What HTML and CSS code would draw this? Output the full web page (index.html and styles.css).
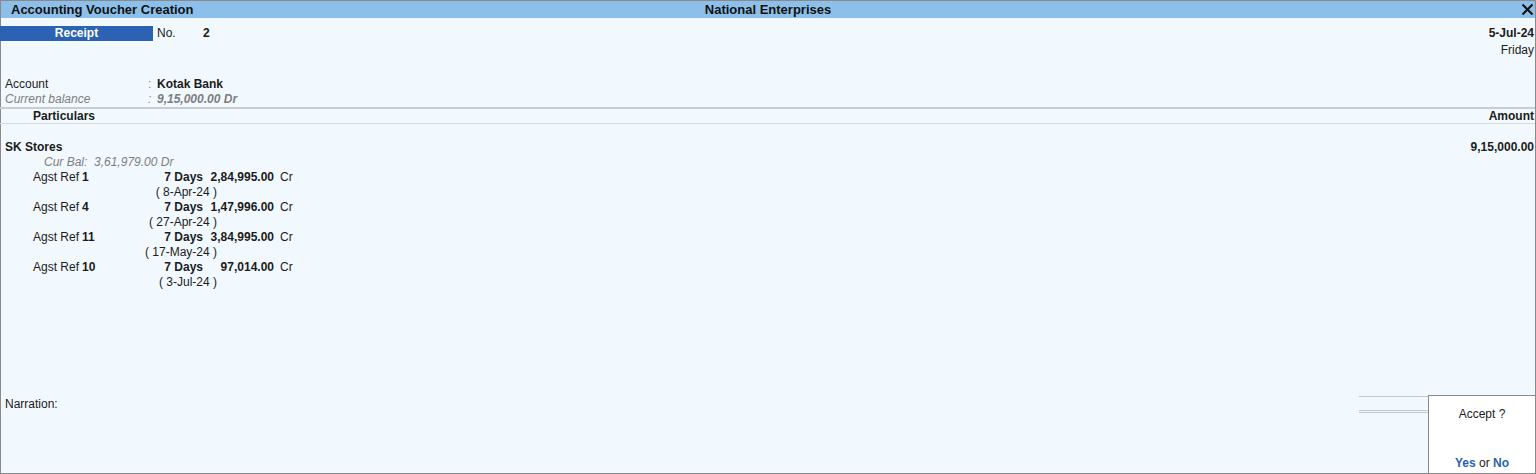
FILE: index.html
```html
<!DOCTYPE html>
<html lang="en">

<head>
    <meta charset="UTF-8" />
    <meta name="viewport" content="width=device-width, initial-scale=1.0" />
    <title>Accounting Voucher Creation</title>
    <link rel="stylesheet" href="styles.css">
</head>

<body>
    <div class="window">
        <div class="titlebar">
            <span class="title-left">Accounting Voucher Creation</span>
            <span class="title-center">National Enterprises</span>
            <span class="title-right">
                <svg class="close" width="13" height="13" viewBox="0 0 13 13">
                    <path d="M1.5 1.5 L11.5 11.5 M11.5 1.5 L1.5 11.5" stroke="#111" stroke-width="2" fill="none" />
                </svg>
            </span>
        </div>

        <div class="voucher-head">
            <div class="voucher-type">
                <span class="type-box">Receipt</span>
                <span class="no-label">No.</span>
                <span class="no-value">2</span>
            </div>
            <div class="voucher-date">
                <div class="date">5-Jul-24</div>
                <div class="day">Friday</div>
            </div>
        </div>

        <div class="account">
            <div class="account-row">
                <span class="acc-label">Account</span>
                <span class="acc-colon">:</span>
                <span class="acc-value">Kotak Bank</span>
            </div>
            <div class="account-row muted">
                <span class="acc-label">Current balance</span>
                <span class="acc-colon">:</span>
                <span class="acc-value">9,15,000.00 Dr</span>
            </div>
        </div>

        <div class="col-head">
            <span class="col-particulars">Particulars</span>
            <span class="col-amount">Amount</span>
        </div>

        <div class="entries">
            <div class="ledger-row">
                <span class="ledger-name">SK Stores</span>
                <span class="ledger-amount">9,15,000.00</span>
            </div>
            <div class="cur-bal">Cur Bal:&nbsp; 3,61,979.00 Dr</div>
            <div id="refList"></div>
        </div>

        <div class="footer">
            <span class="narration">Narration:</span>
            <div class="totals"></div>
        </div>

        <div class="accept">
            <div class="accept-q">Accept ?</div>
            <div class="accept-opts"><span class="opt">Yes</span> or <span class="opt">No</span></div>
        </div>
    </div>

    <script>
        const refs = [
            { no: 1, days: "7 Days", amount: "2,84,995.00", date: "8-Apr-24" },
            { no: 4, days: "7 Days", amount: "1,47,996.00", date: "27-Apr-24" },
            { no: 11, days: "7 Days", amount: "3,84,995.00", date: "17-May-24" },
            { no: 10, days: "7 Days", amount: "97,014.00", date: "3-Jul-24" }
        ];

        const refList = document.getElementById("refList");

        refs.forEach(ref => {
            refList.innerHTML += `
          <div class="ref-row">
            <span class="ref-label">Agst Ref</span>
            <span class="ref-no">${ref.no}</span>
            <span class="ref-days">${ref.days}</span>
            <span class="ref-amount">${ref.amount}</span>
            <span class="ref-side">Cr</span>
          </div>
          <div class="ref-date">( ${ref.date} )</div>
        `;
        });
    </script>
</body>

</html>
```

FILE: styles.css
```css
body {
    margin: 0;
    font-family: "Liberation Sans", Arial, sans-serif;
    font-size: 12px;
    color: #1b1b1b;
}

.window {
    position: relative;
    box-sizing: border-box;
    width: 1536px;
    height: 474px;
    border: 1px solid #8a8a8a;
    background: #f2f9fe;
    display: flex;
    flex-direction: column;
}

.titlebar {
    height: 17px;
    background: #8cc0ea;
    display: grid;
    grid-template-columns: 1fr auto 1fr;
    align-items: center;
    font-size: 13px;
    font-weight: bold;
    color: #111;
}

.title-left {
    padding-left: 10px;
}

.title-right {
    display: flex;
    justify-content: flex-end;
    padding-right: 1px;
}

.close {
    display: block;
}

.voucher-head {
    height: 51px;
    margin-top: 8px;
    display: flex;
    justify-content: space-between;
    line-height: 15px;
}

.voucher-type {
    display: flex;
    align-items: flex-start;
}

.type-box {
    width: 153px;
    height: 15px;
    margin-left: -1px;
    background: #2b62b3;
    color: #fff;
    font-weight: bold;
    text-align: center;
}

.no-label {
    margin-left: 4px;
    width: 46px;
}

.no-value {
    font-weight: bold;
}

.voucher-date {
    text-align: right;
    padding-right: 1px;
}

.date {
    font-weight: bold;
}

.day {
    margin-top: 2px;
}

.account {
    line-height: 15px;
    padding-left: 4px;
}

.account-row {
    display: flex;
}

.acc-label {
    width: 143px;
}

.acc-colon {
    width: 9px;
    color: #888;
}

.acc-value {
    font-weight: bold;
}

.muted {
    color: #7d7d7d;
    font-style: italic;
}

.col-head {
    display: flex;
    justify-content: space-between;
    line-height: 14px;
    font-weight: bold;
    border-top: 2px solid #c9cdd0;
    border-bottom: 1px solid #d6dadd;
    margin-left: -1px;
    padding-left: 33px;
    padding-right: 1px;
}

.entries {
    margin-top: 16px;
    line-height: 15px;
}

.ledger-row {
    display: flex;
    justify-content: space-between;
    font-weight: bold;
    padding-left: 4px;
    padding-right: 1px;
}

.cur-bal {
    padding-left: 43px;
    color: #7d7d7d;
    font-style: italic;
}

.ref-row {
    display: grid;
    grid-template-columns: 49px 68px 53px 71px auto;
    padding-left: 32px;
}

.ref-no,
.ref-days,
.ref-amount {
    font-weight: bold;
}

.ref-days,
.ref-amount {
    text-align: right;
}

.ref-side {
    padding-left: 6px;
}

.ref-date {
    width: 216px;
    text-align: right;
}

.footer {
    margin-top: auto;
    margin-bottom: 60px;
    display: flex;
    justify-content: space-between;
    line-height: 15px;
}

.narration {
    padding-left: 4px;
}

.totals {
    width: 70px;
    height: 13px;
    margin-top: -1px;
    margin-right: 106px;
    border-top: 1px solid #c4c8cb;
    border-bottom: 3px double #c4c8cb;
}

.accept {
    position: absolute;
    right: -1px;
    bottom: -1px;
    box-sizing: border-box;
    width: 108px;
    height: 79px;
    background: #fff;
    border: 1px solid #8a8a8a;
    text-align: center;
    display: flex;
    flex-direction: column;
    justify-content: space-between;
    padding: 11px 0 2px;
}

.accept-opts {
    line-height: 15px;
}

.opt {
    color: #2c5fb0;
    font-weight: bold;
}
```
